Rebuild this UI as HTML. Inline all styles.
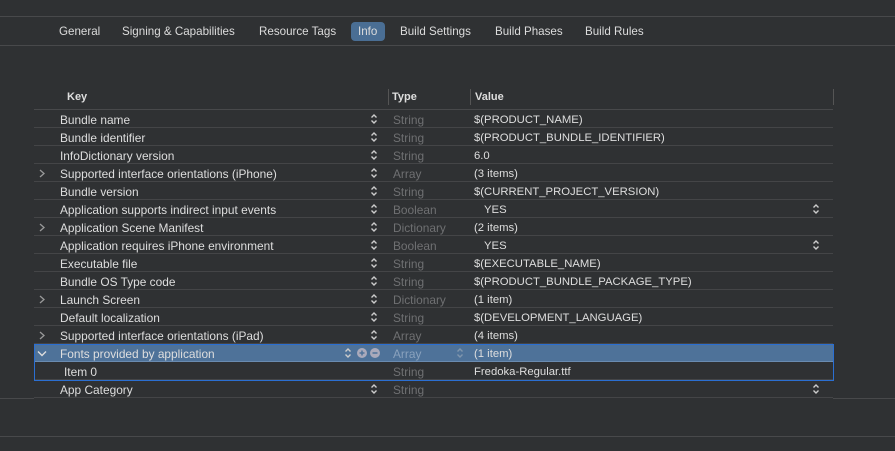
<!DOCTYPE html>
<html><head><meta charset="utf-8"><style>
*{margin:0;padding:0;box-sizing:border-box}
body{width:895px;height:451px;background:#2f3133;font-family:"Liberation Sans",sans-serif;font-size:11px;color:#dedede;position:relative;overflow:hidden}
.a{position:absolute;white-space:nowrap}
.hl{position:absolute;height:1px;background:#48494b}
.tab{position:absolute;top:23px;height:18px;line-height:18px;font-size:11.6px;color:#dcdcdc}
.row{position:absolute;left:34px;width:799px;height:18px;border-bottom:1px solid #444547}
.row span{position:absolute;top:3.5px;line-height:13px;font-size:11.9px;white-space:nowrap}
.k{left:26px}.t{left:359px;color:#6f7072}.row span.v{left:440px;font-size:11.3px}
.chev{left:4px;top:5px;position:absolute}
.ud{position:absolute;left:336px;top:3px;width:8px;height:12px}
</style></head><body>
<div class="hl" style="top:16px;left:0;width:895px"></div>
<div class="hl" style="top:45px;left:0;width:895px"></div>
<div class="tab" style="left:59px">General</div>
<div class="tab" style="left:122px">Signing &amp; Capabilities</div>
<div class="tab" style="left:259px">Resource Tags</div>
<div class="a" style="left:351px;top:22px;width:34px;height:19px;background:#4a6e94;border-radius:4px"></div>
<div class="tab" style="left:358px">Info</div>
<div class="tab" style="left:400px">Build Settings</div>
<div class="tab" style="left:495px">Build Phases</div>
<div class="tab" style="left:585px">Build Rules</div>

<div class="a" style="left:67px;top:91px;font-weight:bold;font-size:11px">Key</div>
<div class="a" style="left:388px;top:89px;width:1px;height:16px;background:#555"></div>
<div class="a" style="left:392px;top:91px;font-weight:bold">Type</div>
<div class="a" style="left:470px;top:89px;width:1px;height:16px;background:#555"></div>
<div class="a" style="left:475px;top:91px;font-weight:bold">Value</div>
<div class="a" style="left:833px;top:89px;width:1px;height:16px;background:#555"></div>
<div class="hl" style="top:109px;left:34px;width:799px"></div>

<div id="rows"></div>
<div class="a" style="left:34px;top:344px;width:800px;height:37px;border:1px solid #2b6fd2"></div>
<div class="hl" style="top:398px;left:0;width:34px"></div>
<div class="hl" style="top:398px;left:833px;width:62px"></div>
<div class="hl" style="top:436px;left:0;width:895px"></div>
<script>
var R=[["Bundle name","String","$(PRODUCT_NAME)"],["Bundle identifier","String","$(PRODUCT_BUNDLE_IDENTIFIER)"],["InfoDictionary version","String","6.0"],["Supported interface orientations (iPhone)","Array","(3 items)",1],["Bundle version","String","$(CURRENT_PROJECT_VERSION)"],["Application supports indirect input events","Boolean","YES",0,1],["Application Scene Manifest","Dictionary","(2 items)",1],["Application requires iPhone environment","Boolean","YES",0,1],["Executable file","String","$(EXECUTABLE_NAME)"],["Bundle OS Type code","String","$(PRODUCT_BUNDLE_PACKAGE_TYPE)"],["Launch Screen","Dictionary","(1 item)",1],["Default localization","String","$(DEVELOPMENT_LANGUAGE)"],["Supported interface orientations (iPad)","Array","(4 items)",1],["Fonts provided by application","Array","(1 item)",2],["Item 0","String","Fredoka-Regular.ttf",3],["App Category","String","",0,1]];
var ud='<svg viewBox="0 0 8 12" width="8" height="12"><path d="M1.5 4.5L4 2L6.5 4.5M1.5 7.5L4 10L6.5 7.5" fill="none" stroke="#ccc" stroke-width="1.4"/></svg>';
var h='';
R.forEach(function(r,i){
 var top=110+i*18, s='';
 var st=r[3]==2?'background:#4e7299;border-bottom-color:#6a8bb0;':'';
 if(r[3]==1) s+='<svg class="chev" width="8" height="9"><path d="M2 1L6 4.5L2 8" fill="none" stroke="#999" stroke-width="1.3"/></svg>';
 if(r[3]==2) s+='<svg class="chev" style="left:3px;top:6px" width="10" height="7"><path d="M1 1.5L5 5.5L9 1.5" fill="none" stroke="#ddd" stroke-width="1.4"/></svg>';
 var k=r[3]==3?'left:30px':'';
 s+='<span class="k" style="'+k+'">'+r[0]+'</span>';
 if(r[3]==2){s+='<div class="ud" style="left:310px">'+ud+'</div><svg class="a" style="left:322px;top:3px" width="24" height="12"><circle cx="6" cy="6" r="5" fill="#aab"/><path d="M3.5 6h5M6 3.5v5" stroke="#4e7299" stroke-width="1.5"/><circle cx="19" cy="6" r="5" fill="#aab"/><path d="M16.5 6h5" stroke="#4e7299" stroke-width="1.5"/></svg><div class="ud" style="left:422px;opacity:.4">'+ud+'</div>';}
 else if(r[3]!=3) s+='<div class="ud">'+ud+'</div>';
 s+='<span class="t" style="'+(r[3]==2?'color:#8aa2bd':'')+'">'+r[1]+'</span>';
 s+='<span class="v" style="'+(r[4]?'left:450px':'')+'">'+r[2]+'</span>';
 if(r[4]) s+='<div class="ud" style="left:778px">'+ud+'</div>';
 h+='<div class="row" style="top:'+top+'px;'+st+'">'+s+'</div>';
});
document.getElementById('rows').innerHTML=h;
</script>
</body></html>
